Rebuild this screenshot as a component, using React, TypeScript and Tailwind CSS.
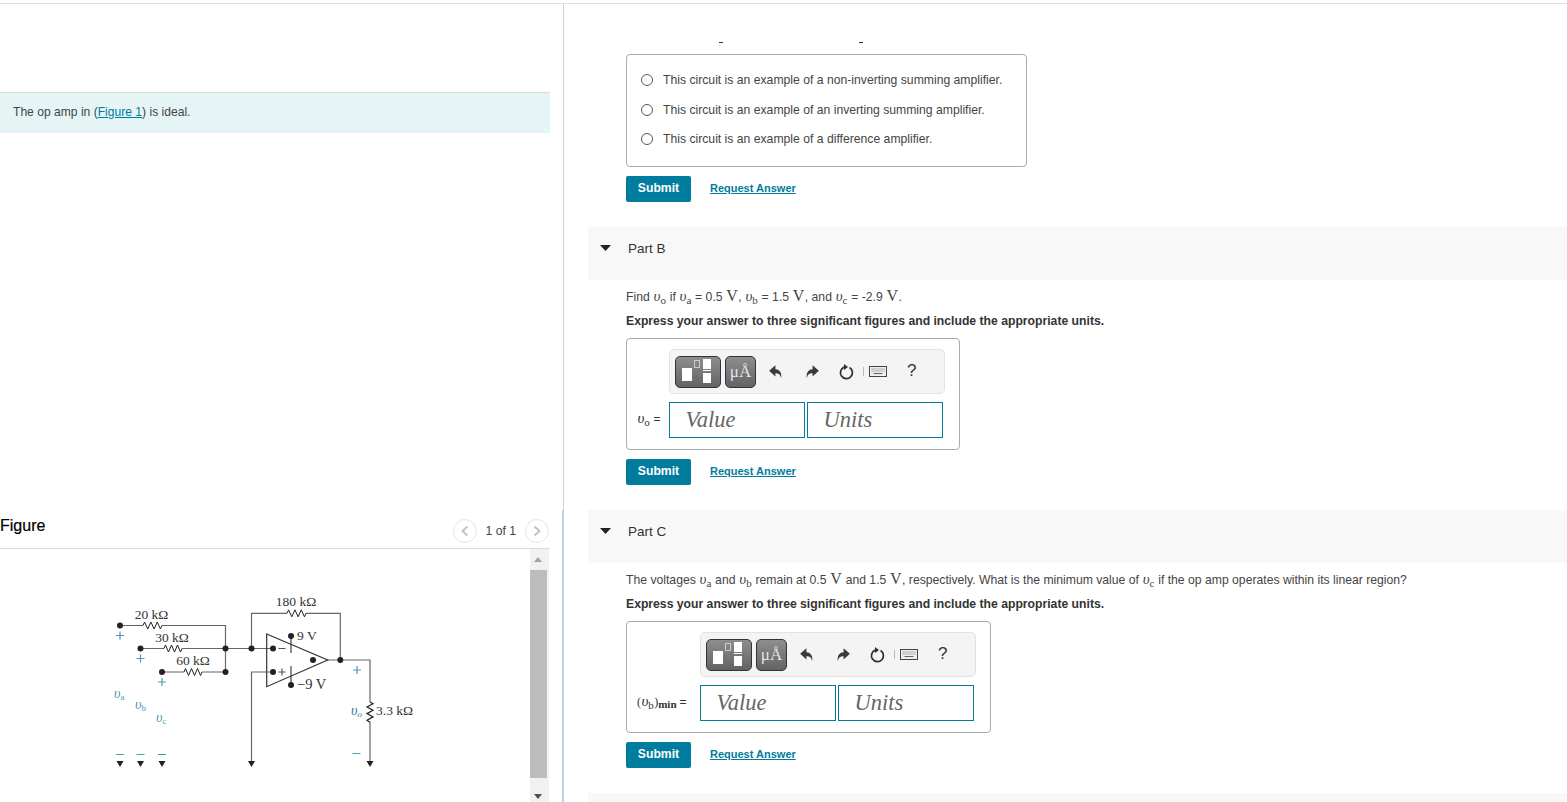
const SANS = "font-['Liberation_Sans',Arial,sans-serif]";

function V({ s, sub }: { s: string; sub?: string }) {
  return (
    <span className="px-[0.4px] font-['Liberation_Serif',serif]">
      <i className="text-[15px]">{s}</i>
      {sub && <sub className="text-[11px] not-italic align-baseline relative top-[3px]">{sub}</sub>}
    </span>
  );
}

function U({ c }: { c: string }) {
  return <span className="px-[0.4px] font-['Liberation_Serif',serif] text-[16px]">{c}</span>;
}

function Zig({ x, y, w }: { x: number; y: number; w: number }) {
  const s = w / 6;
  const d = `M${x} ${y}l${s / 2} -3.5l${s} 7l${s} -7l${s} 7l${s} -7l${s} 7l${s / 2} -3.5`;
  return <path d={d} fill="none" stroke="#222" strokeWidth="1" />;
}

function Dot({ x, y }: { x: number; y: number }) {
  return <circle cx={x} cy={y} r="3" fill="#222" />;
}

function Gnd({ x, y }: { x: number; y: number }) {
  return <path d={`M${x - 3.5} ${y}h7l-3.5 6z`} fill="#222" />;
}

function Sym({ x, y, sub, col }: { x: number; y: number; sub: string; col: string }) {
  return (
    <text x={x} y={y - 549} fill={col} fontSize="14" fontStyle="italic" fontFamily="'Liberation Serif', serif">
      υ
      <tspan fontSize="9" fontStyle={sub === "o" ? "italic" : "normal"} dy="2">
        {sub}
      </tspan>
    </text>
  );
}

function Circuit() {
  const oy = 549;
  const wire = "#666";
  const blue = "#4f9ab5";
  const T = (p: { x: number; y: number; c: string; size?: number; a?: "middle" | "start" }) => (
    <text
      x={p.x}
      y={p.y - oy}
      fill="#333"
      fontSize={p.size ?? 13.5}
      textAnchor={p.a ?? "middle"}
      fontFamily="'Liberation Serif', serif"
    >
      {p.c}
    </text>
  );
  return (
    <svg width="530" height="253" viewBox="0 0 530 253" className="block">
      <g transform={`translate(0 ${-oy})`} fill="none" stroke={wire} strokeWidth="1.2">
        <path d="M120 625.5H143M162 625.5H225.5V672" />
        <path d="M140.5 648.5H164M182 648.5H273" />
        <path d="M162 672H184M202 672H225.5" />
        <path d="M273 672H251.5V762M251.5 648.5V613.3H287M306 613.3H340.3V660" />
        <path d="M327 660H370V702M370 722V762" />
        <path d="M291 636V653M291 666V685" stroke="#444" />
        <path d="M266.7 634L327.7 660L266.7 686.7Z" stroke="#333" />
        <path d="M370 702l3 1.7l-6 3.3l6 3.3l-6 3.3l6 3.3l-6 3.3l3 2" stroke="#222" />
        <Zig x={143} y={625.5} w={19} />
        <Zig x={164} y={648.5} w={18} />
        <Zig x={184} y={672} w={18} />
        <Zig x={287} y={613.3} w={19} />
        <g stroke="none">
          <Dot x={120} y={625.5} />
          <Dot x={140.5} y={648.5} />
          <Dot x={162} y={672} />
          <Dot x={225.5} y={648.5} />
          <Dot x={225.5} y={672} />
          <Dot x={251.5} y={648.5} />
          <Dot x={273} y={648.5} />
          <Dot x={273} y={672} />
          <Dot x={291} y={636} />
          <Dot x={291} y={685} />
          <Dot x={313} y={660} />
          <Dot x={340.3} y={660} />
          <Gnd x={120} y={761} />
          <Gnd x={140.5} y={761} />
          <Gnd x={162} y={761} />
          <Gnd x={251.5} y={761} />
          <Gnd x={370} y={761} />
        </g>
        <path d="M116 754.5h8M136.5 754.5h8M158 754.5h8M352.5 753.5h8" stroke={blue} />
        <path d="M116 635.5h8M120 631.5v8M136.5 658.5h8M140.5 654.5v8M158 682h8M162 678v8M353 670h8M357 666v8" stroke={blue} />
        <path d="M278.5 648.5h7M278.5 672h7M282 668.5v7" stroke="#555" />
      </g>
      <g>
        {T({ x: 151.5, y: 619, c: "20 kΩ" })}
        {T({ x: 172, y: 642, c: "30 kΩ" })}
        {T({ x: 193, y: 665, c: "60 kΩ" })}
        {T({ x: 296, y: 606, c: "180 kΩ" })}
        {T({ x: 297, y: 640, c: "9 V", a: "start" })}
        {T({ x: 297, y: 689, c: "−9 V", a: "start", size: 14.5 })}
        {T({ x: 376, y: 715, c: "3.3 kΩ", a: "start" })}
        <Sym x={114} y={698} sub="a" col={blue} />
        <Sym x={135} y={709} sub="b" col={blue} />
        <Sym x={156} y={722} sub="c" col={blue} />
        <Sym x={351} y={715} sub="o" col="#2c7a96" />
      </g>
    </svg>
  );
}

function Chevron({ dir, ml }: { dir: "l" | "r"; ml: string }) {
  return (
    <span className={`flex h-6 w-6 items-center justify-center rounded-full border border-[#e5e5e5] ${ml}`}>
      <svg width="10" height="12" viewBox="0 0 10 12" fill="none" stroke="#c4c4c4" strokeWidth="2">
        <path d={dir === "l" ? "M7.5 1.5L2.5 6l5 4.5" : "M2.5 1.5L7.5 6l-5 4.5"} />
      </svg>
    </span>
  );
}

function Submit() {
  return (
    <div className="flex h-[26px] items-center">
      <button className="flex h-[26px] w-[65px] items-center justify-center rounded-[2px] bg-[#007c9e] pb-[2px] text-[12.2px] font-bold text-white">
        Submit
      </button>
      <a className="mb-[2px] ml-[19px] text-[11px] font-bold text-[#007c9e] underline">Request Answer</a>
    </div>
  );
}

function PartHeader({ label }: { label: string }) {
  return (
    <div className="flex h-[53px] items-start bg-[#f8f8f8] pl-[12px] pt-[14px]">
      <svg width="11" height="6" viewBox="0 0 11 6" className="mt-[4px]">
        <path d="M0 0h11L5.5 6z" fill="#222" />
      </svg>
      <span className="ml-[17px] text-[13.5px] leading-[15px] text-[#333]">{label}</span>
    </div>
  );
}

function Toolbar() {
  return (
    <div className="flex h-[45px] w-[276px] items-center rounded-[5px] border border-[#e2e2e2] bg-[#f4f4f4] pl-[5px]">
      <span className="relative h-[32px] w-[46px] rounded-[5px] border border-[#333] bg-gradient-to-b from-[#8e8e90] to-[#636365]">
        <span className="absolute left-[6px] top-[11px] h-[13px] w-[10px] bg-white" />
        <span className="absolute left-[18px] top-[3px] h-[8px] w-[6px] border border-[#ccc]" />
        <span className="absolute left-[27px] top-[2px] h-[10px] w-[8px] bg-white" />
        <span className="absolute left-[27px] top-[13px] h-px w-[8px] bg-white" />
        <span className="absolute left-[27px] top-[16px] h-[10px] w-[8px] bg-white" />
      </span>
      <span className="ml-[4px] flex h-[32px] w-[31px] items-center justify-center rounded-[5px] border border-[#333] bg-gradient-to-b from-[#8e8e90] to-[#636365] font-['Liberation_Serif',serif] text-[17px] text-[#e4e4e4]">
        μÅ
      </span>
      <svg width="16" height="16" viewBox="0 0 14 14" className="ml-[12px]" fill="#3a3a3a">
        <path d="M6.5 1L1 6l5.5 5V8c2.6 0 4.4.7 5 4.5.8-4.5-1-7.7-5-8z" />
      </svg>
      <svg width="16" height="16" viewBox="0 0 14 14" className="ml-[20px]" fill="#3a3a3a">
        <path d="M7.5 1L13 6l-5.5 5V8c-2.6 0-4.4.7-5 4.5-.8-4.5 1-7.7 5-8z" />
      </svg>
      <svg width="16" height="18" viewBox="0 0 16 17" className="ml-[18px]" fill="none" stroke="#2f2f2f" strokeWidth="1.7">
        <path d="M6.2 3.6A6 6 0 1 0 11.5 4" />
        <path d="M6 0.5v6l4-3z" fill="#2f2f2f" stroke="none" />
      </svg>
      <span className="ml-[9px] h-[9px] w-px bg-[#bbb]" />
      <svg width="18" height="11" viewBox="0 0 18 11" className="ml-[5px]">
        <rect x="0.5" y="0.5" width="17" height="10" fill="#eee" stroke="#444" />
        <path d="M2.5 3h13M2.5 5h13" stroke="#888" strokeDasharray="1.2 .8" />
        <path d="M4.5 7.5h9" stroke="#666" />
      </svg>
      <span className="mb-[3px] ml-[20px] text-[17px] leading-none text-[#333]">?</span>
    </div>
  );
}

function Answer({ w, ml, label }: { w: string; ml: string; label: React.ReactNode }) {
  return (
    <div className={`mt-[9px] h-[112px] rounded-[4px] border border-[#aaa] ${w}`}>
      <div className={`mt-[10px] ${ml}`}>
        <Toolbar />
      </div>
      <div className="relative mt-[8px]">
        <div className="absolute left-[10px] top-[9px] text-[12px] leading-[15px] text-[#333] whitespace-nowrap">{label}</div>
        <div className={`flex gap-[2px] ${ml}`}>
          {["Value", "Units"].map((t) => (
            <div
              key={t}
              className="flex h-[36px] w-[136px] items-center border border-[#007c9e] pl-[15.5px] font-['Liberation_Serif',serif] text-[22.5px] italic text-[#666]"
            >
              {t}
            </div>
          ))}
        </div>
      </div>
    </div>
  );
}

export default function App() {
  const options = [
    "This circuit is an example of a non-inverting summing amplifier.",
    "This circuit is an example of an inverting summing amplifier.",
    "This circuit is an example of a difference amplifier.",
  ];
  return (
    <div className={`${SANS} h-[802px] w-[1567px] overflow-hidden bg-white pt-[3px]`}>
      <div className="flex h-[799px] border-t border-[#e0e0e0]">
        {/* Left column */}
        <div className="w-[562px] shrink-0">
          <div className="w-[550px]">
            <div className="mt-[88px] flex h-[41px] items-center border-t border-[#dcdcdc] bg-[#e5f5f6] pb-[2px] pl-[13px] text-[12.1px] text-[#444]">
              <span>
                The op amp in (<a className="text-[#007c9e] underline">Figure 1</a>) is ideal.
              </span>
            </div>
            <div className="mt-[384px] flex h-[32px] items-start border-b border-[#dcdcdc]">
              <span className="text-[16px] leading-[18px] text-black [-webkit-text-stroke:0.2px_black]">Figure</span>
              <div className="ml-auto flex items-center pr-px pt-[2px] text-[12.2px] text-[#444]">
                <Chevron dir="l" ml="" />
                <span className="ml-[9px]">1 of 1</span>
                <Chevron dir="r" ml="ml-[9px]" />
              </div>
            </div>
            <div className="flex h-[254px]">
              <div className="w-[530px] overflow-hidden">
                <Circuit />
              </div>
              <div className="relative w-[19px] bg-[#f1f1f1]">
                <span className="absolute left-[4px] top-[8px] h-0 w-0 border-x-[4.5px] border-b-[5px] border-x-transparent border-b-[#a3a3a3]" />
                <span className="absolute left-0 top-[21px] h-[208px] w-[17px] bg-[#bdbdbd]" />
                <span className="absolute left-[4px] top-[245px] h-0 w-0 border-x-[4.5px] border-t-[5px] border-x-transparent border-t-[#505050]" />
              </div>
            </div>
          </div>
        </div>
        {/* Divider */}
        <div className="flex w-[2px] shrink-0 flex-col">
          <div className="h-[506px] w-px self-end bg-[#c5d5e3]" />
          <div className="flex-1 bg-[#bcd2e6]" />
        </div>
        {/* Right column */}
        <div className="ml-[24px] flex-1">
          <div className="pl-[38px]">
            <div className="flex h-[50px] items-start">
              <span className="ml-[93px] mt-[38px] h-px w-[4px] bg-[#333]" />
              <span className="ml-[136px] mt-[38px] h-px w-[4px] bg-[#333]" />
            </div>
            <div className="flex h-[113px] w-[401px] flex-col rounded-[4px] border border-[#aaa] pl-[14px] pt-[10px] text-[12.2px] text-[#444]">
              {options.map((o, i) => (
                <div key={o} className={`flex h-[30px] items-center ${i === 2 ? "-mt-px" : ""}`}>
                  <span className="h-[12px] w-[12px] rounded-full border border-[#555] bg-white" />
                  <span className="ml-[10px]">{o}</span>
                </div>
              ))}
            </div>
            <div className="mt-[9px]">
              <Submit />
            </div>
          </div>
          <div className="mt-[25px]">
            <PartHeader label="Part B" />
          </div>
          <div className="pl-[38px]">
            <p className="mt-[7px] h-[19px] text-[12.2px] leading-[18px] text-[#444]">
              Find <V s="υ" sub="o" /> if <V s="υ" sub="a" /> = 0.5 <U c="V" />, <V s="υ" sub="b" /> = 1.5 <U c="V" />, and <V s="υ" sub="c" /> = -2.9 <U c="V" />.
            </p>
            <p className="mt-[8px] h-[15px] text-[12.2px] font-bold leading-[15px] text-[#333]">
              Express your answer to three significant figures and include the appropriate units.
            </p>
            <Answer w="w-[334px]" ml="ml-[42px]" label={<span><V s="υ" sub="o" /> =</span>} />
            <div className="mt-[9px]">
              <Submit />
            </div>
          </div>
          <div className="mt-[25px]">
            <PartHeader label="Part C" />
          </div>
          <div className="pl-[38px]">
            <p className="mt-[7px] h-[19px] text-[12.2px] leading-[18px] text-[#444]">
              The voltages <V s="υ" sub="a" /> and <V s="υ" sub="b" /> remain at 0.5 <U c="V" /> and 1.5 <U c="V" />, respectively. What is the minimum value of <V s="υ" sub="c" /> if the op amp operates within its linear region?
            </p>
            <p className="mt-[8px] h-[15px] text-[12.2px] font-bold leading-[15px] text-[#333]">
              Express your answer to three significant figures and include the appropriate units.
            </p>
            <Answer
              w="w-[365px]"
              ml="ml-[73px]"
              label={
                <span className="font-['Liberation_Serif',serif]">
                  (<V s="υ" sub="b" />)<span className="relative top-[2px] text-[11px] font-bold">min</span> <span className={SANS}>=</span>
                </span>
              }
            />
            <div className="mt-[9px]">
              <Submit />
            </div>
          </div>
          <div className="mt-[25px] h-[20px] bg-[#f8f8f8]" />
        </div>
      </div>
    </div>
  );
}
